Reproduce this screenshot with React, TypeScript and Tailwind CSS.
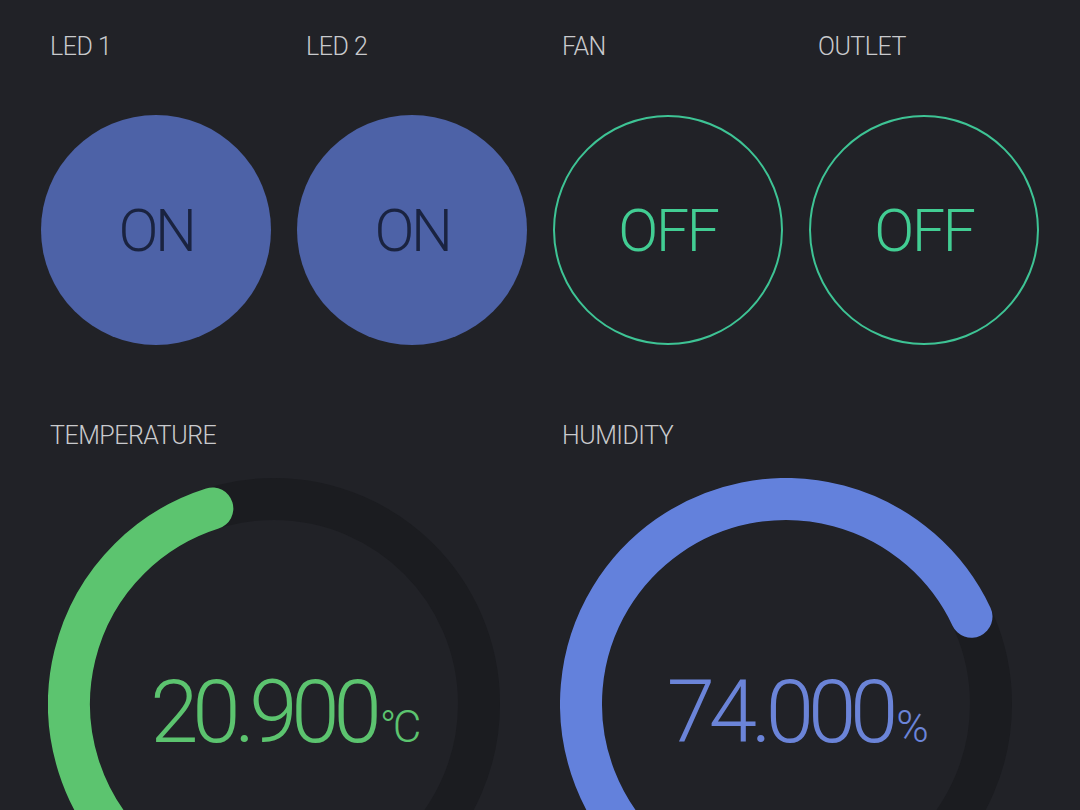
import React from 'react';

type Toggle = { label: string; on: boolean };

const toggles: Toggle[] = [
  { label: 'LED 1', on: true },
  { label: 'LED 2', on: true },
  { label: 'FAN', on: false },
  { label: 'OUTLET', on: false },
];

const C = 226;
const R = 205;

function pt(deg: number) {
  const a = (deg * Math.PI) / 180;
  return { x: C + R * Math.sin(a), y: C - R * Math.cos(a) };
}

function arc(from: number, to: number) {
  const s = pt(from);
  const e = pt(to);
  const large = to - from > 180 ? 1 : 0;
  return `M ${s.x.toFixed(2)} ${s.y.toFixed(2)} A ${R} ${R} 0 ${large} 1 ${e.x.toFixed(2)} ${e.y.toFixed(2)}`;
}

const ToggleButton: React.FC<Toggle> = ({ label, on }) => (
  <div className="flex flex-col">
    <div className="pl-[9px] pt-[34px] text-[25px] leading-[25px] font-light tracking-[-0.5px] text-[#c9cacd]">
      {label}
    </div>
    {on ? (
      <div className="mt-[56px] flex h-[230px] w-[230px] items-center justify-center rounded-full bg-[#4d62a7]">
        <span className="text-[59px] leading-none font-light tracking-[-0.06em] text-[#1a2340]">ON</span>
      </div>
    ) : (
      <div className="mt-[56px] flex h-[230px] w-[230px] items-center justify-center rounded-full border-2 border-[#3ec495]">
        <span className="text-[59px] leading-none font-light tracking-[-0.04em] text-[#42cd93]">OFF</span>
      </div>
    )}
  </div>
);

type GaugeProps = {
  label: string;
  value: string;
  unit: string;
  end: number;
  arcColor: string;
  textClass: string;
};

const Gauge: React.FC<GaugeProps> = ({ label, value, unit, end, arcColor, textClass }) => (
  <div className="flex flex-col">
    <div className="pl-[2px] text-[25px] leading-[25px] font-light tracking-[-0.5px] text-[#c9cacd]">{label}</div>
    <div className="relative mt-[30px] h-[452px] w-[452px]">
      <svg width="452" height="452" viewBox="0 0 452 452">
        <path d={arc(-135, 135)} fill="none" stroke="#1b1c20" strokeWidth="42" strokeLinecap="round" />
        <path d={arc(-135, end)} fill="none" stroke={arcColor} strokeWidth="42" strokeLinecap="round" />
      </svg>
      {/* valor no centro */}
      <div className={`absolute left-0 right-0 top-[191px] flex items-baseline justify-center pl-[20px] ${textClass}`}>
        <span className="text-[87px] leading-[87px] font-light tracking-[-0.07em]">{value}</span>
        <span className="ml-[4px] text-[44px] leading-none font-light tracking-[-0.08em]">{unit}</span>
      </div>
    </div>
  </div>
);

export default function App() {
  return (
    <div className="h-[810px] w-[1080px] overflow-hidden bg-[#212227] font-['Roboto',sans-serif]">
      <div className="grid grid-cols-[repeat(4,230px)] gap-x-[26px] pl-[41px]">
        {toggles.map((t) => (
          <ToggleButton key={t.label} {...t} />
        ))}
      </div>
      <div className="mt-[78px] grid grid-cols-[repeat(2,452px)] gap-x-[60px] pl-[48px]">
        <Gauge
          label="TEMPERATURE"
          value="20.900"
          unit="°C"
          end={-17.5}
          arcColor="#5cc46f"
          textClass="text-[#5cc46f]"
        />
        <Gauge
          label="HUMIDITY"
          value="74.000"
          unit="%"
          end={64.8}
          arcColor="#6381dc"
          textClass="text-[#6b84d8]"
        />
      </div>
    </div>
  );
}
